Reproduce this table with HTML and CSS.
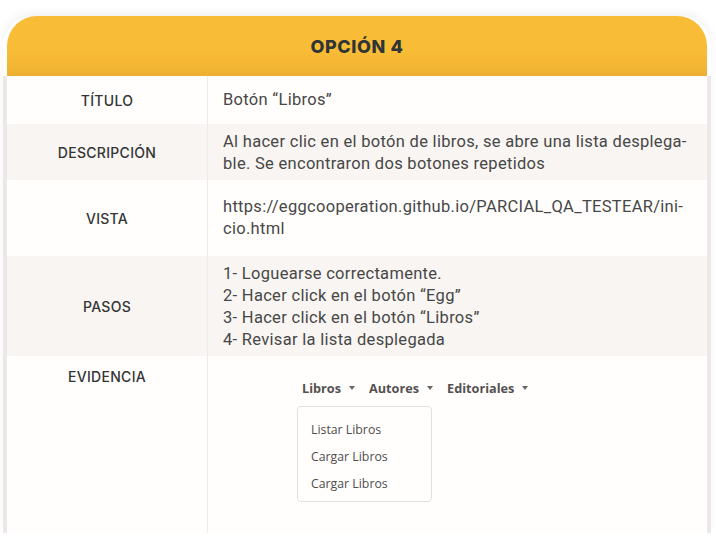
FILE: index.html
```html
<!DOCTYPE html>
<html lang="es">
<head>
<meta charset="utf-8">
<link rel="stylesheet" href="styles.css">
</head>
<body>
<div class="card">
  <div class="head">OPCIÓN 4</div>
  <div class="body">
    <div class="row r-titulo">
      <div class="label">TÍTULO</div>
      <div class="value">Botón “Libros”</div>
    </div>
    <div class="row alt r-desc">
      <div class="label">DESCRIPCIÓN</div>
      <div class="value">Al hacer clic en el botón de libros, se abre una lista desplega-<br>ble. Se encontraron dos botones repetidos</div>
    </div>
    <div class="row r-vista">
      <div class="label">VISTA</div>
      <div class="value">https://eggcooperation.github.io/PARCIAL_QA_TESTEAR/ini-<br>cio.html</div>
    </div>
    <div class="row alt r-pasos">
      <div class="label">PASOS</div>
      <div class="value">1- Loguearse correctamente.<br>2- Hacer click en el botón “Egg”<br>3- Hacer click en el botón “Libros”<br>4- Revisar la lista desplegada</div>
    </div>
    <div class="row r-evid">
      <div class="label top">EVIDENCIA</div>
      <div class="value shot">
        <div class="nav">
          <span class="nav-item">Libros <span class="caret"></span></span>
          <span class="nav-item">Autores <span class="caret"></span></span>
          <span class="nav-item">Editoriales <span class="caret"></span></span>
        </div>
        <div class="menu">
          <div class="menu-item">Listar Libros</div>
          <div class="menu-item">Cargar Libros</div>
          <div class="menu-item">Cargar Libros</div>
        </div>
      </div>
    </div>
  </div>
</div>
</body>
</html>
```
FILE: styles.css
```css
html, body {
  margin: 0;
  padding: 0;
  background: #ffffff;
}
body {
  padding: 16px 0 0 3px;
  font-family: "Roboto", "Liberation Sans", sans-serif;
}
.card {
  width: 708px;
  box-shadow: 0 -4px 8px rgba(0,0,0,0.05);
  border-radius: 30px 30px 0 0;
}
.head {
  height: 60px;
  margin: 0 4px;
  border-radius: 30px 30px 0 0;
  background: linear-gradient(#f9bc36 0%, #f9bc36 60%, #eeb031 100%);
  display: flex;
  align-items: center;
  justify-content: center;
  font-family: "Inter", "Liberation Sans", sans-serif;
  font-weight: 800;
  font-size: 18px;
  color: #2f3437;
  letter-spacing: 0.6px;
}
.body {
  border-left: 4px solid #ede8e8;
  border-right: 4px solid #ede8e8;
}
.row {
  display: flex;
  background: #fffefc;
}
.row.alt {
  background: #f8f5f2;
}
.label {
  width: 200px;
  flex: none;
  border-right: 1px solid #efebea;
  display: flex;
  align-items: center;
  justify-content: center;
  font-family: "Inter", "Liberation Sans", sans-serif;
  font-weight: 500;
  font-size: 14px;
  letter-spacing: 0.3px;
  color: #343434;
}
.label.top {
  align-items: flex-start;
  padding-top: 12px;
}
.value {
  padding-left: 15px;
  display: flex;
  flex-direction: column;
  justify-content: center;
  font-size: 16.5px;
  letter-spacing: 0.3px;
  line-height: 22px;
  color: #474747;
}
.r-titulo { height: 48px; }
.r-desc { height: 56px; }
.r-desc .value { padding-top: 2px; }
.r-vista { height: 76px; }
.r-pasos { height: 100px; }
.r-pasos .value { padding-top: 2px; }
.r-evid { height: 177px; }
.value.shot {
  justify-content: flex-start;
  padding-left: 89px;
  letter-spacing: 0;
  font-family: "Open Sans", "Liberation Sans", sans-serif;
}
.nav {
  display: flex;
  gap: 14px;
  padding: 23px 0 0 5px;
  line-height: 18px;
  font-size: 12.7px;
  font-weight: 700;
  color: #555151;
}
.nav-item {
  display: flex;
  align-items: center;
  gap: 8px;
}
.caret {
  display: inline-block;
  width: 0;
  height: 0;
  border-left: 3px solid transparent;
  border-right: 3px solid transparent;
  border-top: 4px solid #6a6666;
}
.menu {
  margin-top: 9px;
  width: 135px;
  height: 96px;
  border: 1px solid #e4e0e0;
  border-radius: 4px;
  padding-top: 9px;
  box-sizing: border-box;
}
.menu-item {
  padding-left: 13px;
  font-size: 12.3px;
  line-height: 27px;
  color: #4f4c4c;
}
```
